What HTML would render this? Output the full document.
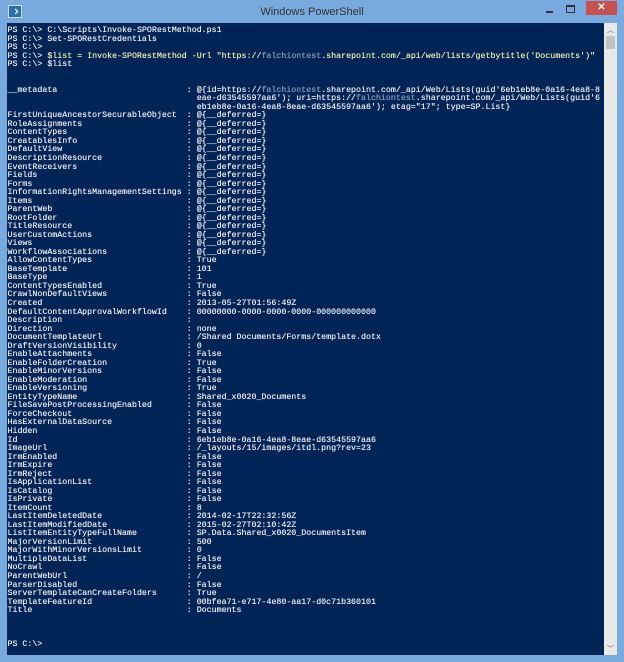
<!DOCTYPE html>
<html><head><meta charset="utf-8"><style>
html,body{margin:0;padding:0;width:624px;height:662px;overflow:hidden;background:#78aade;}
.title{position:absolute;left:0;top:0;width:624px;height:23px;text-align:center;font:11px "Liberation Sans",sans-serif;color:#333;line-height:24px;}
.icon{position:absolute;left:8px;top:5px;width:12px;height:11px;background:#2a6fb5;border:1px solid #cfe0f2;}
.icon:after{content:"";position:absolute;left:3px;top:2px;width:5px;height:5px;border-right:2px solid #fff;border-bottom:2px solid #fff;transform:rotate(-45deg) scale(.6);}
.min{position:absolute;left:546px;top:11px;width:7px;height:2px;background:#333;}
.max{position:absolute;left:566px;top:5px;width:7px;height:5px;border:1px solid #333;border-top-width:2px;}
.close{position:absolute;left:586px;top:1px;width:31px;height:14px;background:#c75050;color:#fff;font:bold 10px "Liberation Sans",sans-serif;text-align:center;line-height:14px;}
.con{position:absolute;left:7px;top:23px;width:597px;height:632px;background:#012456;overflow:hidden;}
.sb{position:absolute;left:604px;top:23px;width:13px;height:632px;background:#e8e8e8;}
.thumb{position:absolute;left:606px;top:36px;width:9px;height:13px;background:#c2c2c2;}
.ar{position:absolute;left:604px;width:13px;text-align:center;font:7px "Liberation Sans",sans-serif;color:#555;}
pre{margin:0;position:absolute;left:0.5px;top:0;font-family:"Liberation Mono",monospace;font-size:8.3px;line-height:8.53px;color:#eeedf0;transform:translateY(4px);text-shadow:0 0 0.4px #eeedf0;}
.y{color:#eeee9a;}
.b{color:#6b86b0;}
</style></head><body>
<div class="title">Windows PowerShell</div>
<div class="icon"></div>
<div class="min"></div><div class="max"></div>
<div class="close">✕</div>
<div class="con"><pre>PS C:\&gt; C:\Scripts\Invoke-SPORestMethod.ps1
PS C:\&gt; Set-SPORestCredentials
PS C:\&gt;
PS C:\&gt; <span class="y">$list = Invoke-SPORestMethod -Url "https://<span class="b">falchiontest</span>.sharepoint.com/_api/web/lists/getbytitle('Documents')"</span>
PS C:\&gt; $list


__metadata                          : @{id=https://<span class="b">falchiontest</span>.sharepoint.com/_api/Web/Lists(guid'6eb1eb8e-0a16-4ea8-8
                                      eae-d63545597aa6'); uri=https://<span class="b">falchiontest</span>.sharepoint.com/_api/Web/Lists(guid'6
                                      eb1eb8e-0a16-4ea8-8eae-d63545597aa6'); etag="17"; type=SP.List}
FirstUniqueAncestorSecurableObject  : @{__deferred=}
RoleAssignments                     : @{__deferred=}
ContentTypes                        : @{__deferred=}
CreatablesInfo                      : @{__deferred=}
DefaultView                         : @{__deferred=}
DescriptionResource                 : @{__deferred=}
EventReceivers                      : @{__deferred=}
Fields                              : @{__deferred=}
Forms                               : @{__deferred=}
InformationRightsManagementSettings : @{__deferred=}
Items                               : @{__deferred=}
ParentWeb                           : @{__deferred=}
RootFolder                          : @{__deferred=}
TitleResource                       : @{__deferred=}
UserCustomActions                   : @{__deferred=}
Views                               : @{__deferred=}
WorkflowAssociations                : @{__deferred=}
AllowContentTypes                   : True
BaseTemplate                        : 101
BaseType                            : 1
ContentTypesEnabled                 : True
CrawlNonDefaultViews                : False
Created                             : 2013-05-27T01:56:49Z
DefaultContentApprovalWorkflowId    : 00000000-0000-0000-0000-000000000000
Description                         :
Direction                           : none
DocumentTemplateUrl                 : /Shared Documents/Forms/template.dotx
DraftVersionVisibility              : 0
EnableAttachments                   : False
EnableFolderCreation                : True
EnableMinorVersions                 : False
EnableModeration                    : False
EnableVersioning                    : True
EntityTypeName                      : Shared_x0020_Documents
FileSavePostProcessingEnabled       : False
ForceCheckout                       : False
HasExternalDataSource               : False
Hidden                              : False
Id                                  : 6eb1eb8e-0a16-4ea8-8eae-d63545597aa6
ImageUrl                            : /_layouts/15/images/itdl.png?rev=23
IrmEnabled                          : False
IrmExpire                           : False
IrmReject                           : False
IsApplicationList                   : False
IsCatalog                           : False
IsPrivate                           : False
ItemCount                           : 8
LastItemDeletedDate                 : 2014-02-17T22:32:56Z
LastItemModifiedDate                : 2015-02-27T02:10:42Z
ListItemEntityTypeFullName          : SP.Data.Shared_x0020_DocumentsItem
MajorVersionLimit                   : 500
MajorWithMinorVersionsLimit         : 0
MultipleDataList                    : False
NoCrawl                             : False
ParentWebUrl                        : /
ParserDisabled                      : False
ServerTemplateCanCreateFolders      : True
TemplateFeatureId                   : 00bfea71-e717-4e80-aa17-d0c71b360101
Title                               : Documents



PS C:\&gt;</pre></div>
<div class="sb"></div><div class="thumb"></div>
<div class="ar" style="top:25px">︿</div>
<div class="ar" style="top:644px">﹀</div>
</body></html>
